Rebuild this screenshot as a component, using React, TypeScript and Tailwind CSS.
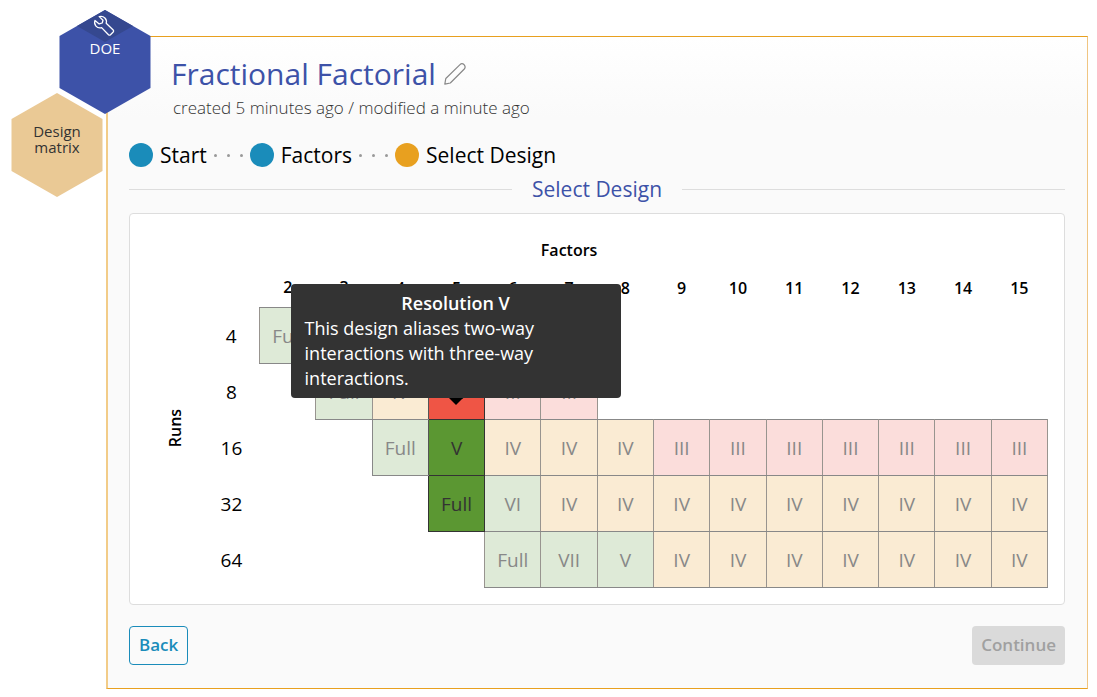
import React from "react";

type Tone = "good" | "fair" | "poor";
type Cell = { label: string; tone: Tone };

const FACTORS = [2, 3, 4, 5, 6, 7, 8, 9, 10, 11, 12, 13, 14, 15];

const g = (label: string): Cell => ({ label, tone: "good" });
const f = (label: string): Cell => ({ label, tone: "fair" });
const p = (label: string): Cell => ({ label, tone: "poor" });

const ROWS: { runs: number; first: number; cells: Cell[] }[] = [
  { runs: 4, first: 2, cells: [g("Full"), p("III")] },
  { runs: 8, first: 3, cells: [g("Full"), f("IV"), p("III"), p("III"), p("III")] },
  {
    runs: 16,
    first: 4,
    cells: [g("Full"), g("V"), f("IV"), f("IV"), f("IV"), p("III"), p("III"), p("III"), p("III"), p("III"), p("III"), p("III")],
  },
  {
    runs: 32,
    first: 5,
    cells: [g("Full"), g("VI"), f("IV"), f("IV"), f("IV"), f("IV"), f("IV"), f("IV"), f("IV"), f("IV"), f("IV")],
  },
  {
    runs: 64,
    first: 6,
    cells: [g("Full"), g("VII"), g("V"), f("IV"), f("IV"), f("IV"), f("IV"), f("IV"), f("IV"), f("IV")],
  },
];

const ACTIVE_FACTORS = 5;

const FADED: Record<Tone, string> = {
  good: "bg-[#deead7] text-[#888888]",
  fair: "bg-[#faebd3] text-[#888888]",
  poor: "bg-[#fbdddb] text-[#888888]",
};
const ACTIVE: Record<Tone, string> = {
  good: "bg-[#5b9732] text-[#333333]",
  fair: "bg-[#e8a01f] text-[#333333]",
  poor: "bg-[#ef5545] text-[#333333]",
};

function Hexagon({ className }: { className: string }) {
  return (
    <svg viewBox="0 0 92 104" className={`absolute inset-0 h-full w-full ${className}`} aria-hidden="true">
      <polygon points="46,0 91.500,26 91.500,78 46,104 .5,78 .5,26" fill="currentColor" />
    </svg>
  );
}

function Tooltip() {
  return (
    <div
      role="tooltip"
      className="absolute right-1/2 bottom-full z-10 mb-[22px] -mr-[164px] w-[330px] rounded bg-[#333333] px-3.5 py-[7px] text-left text-[18px] leading-[25px] font-medium text-white"
    >
      <p className="text-center font-semibold">Resolution V</p>
      <p>This design aliases two-way interactions with three-way interactions.</p>
      <span className="absolute top-full left-1/2 h-0 w-0 -translate-x-1/2 border-x-[7px] border-t-[7px] border-x-transparent border-t-black" />
    </div>
  );
}

function Step({ label, color }: { label: string; color: string }) {
  return (
    <li className="flex items-center gap-[7px]">
      <span className={`size-6 rounded-full ${color}`} />
      {label}
    </li>
  );
}

function Dots() {
  return (
    <li aria-hidden="true" className="flex w-[43px] items-center justify-center gap-[10px]">
      <span className="size-[3px] rounded-full bg-[#999999]" />
      <span className="size-[3px] rounded-full bg-[#999999]" />
      <span className="size-[3px] rounded-full bg-[#999999]" />
    </li>
  );
}

function DesignTable() {
  return (
    <table className="w-full table-fixed border-collapse">
      <thead>
        <tr className="h-[38px]">
          <th colSpan={15} className="p-0 pt-0.5 text-base font-semibold">Factors</th>
          <td />
        </tr>
      </thead>
      <tbody>
        <tr className="h-[39px]">
          <th rowSpan={6} className="p-0 text-base font-semibold">
            <span className="inline-block -rotate-90">Runs</span>
          </th>
          <td />
          {FACTORS.map((n) => (
            <th key={n} scope="col" className="p-0 text-base font-semibold">{n}</th>
          ))}
        </tr>
        {ROWS.map((row) => {
          const last = row.first + row.cells.length - 1;
          return (
            <tr key={row.runs} className="h-14">
              <th scope="row" className="p-0 pt-px text-[19px] leading-6 font-normal">{row.runs}</th>
              {FACTORS.map((n) => {
                if (n < row.first || n > last) return <td key={n} />;
                const cell = row.cells[n - row.first];
                const active = n === ACTIVE_FACTORS;
                const edge = active
                  ? "border-[#333333]"
                  : n === ACTIVE_FACTORS - 1
                    ? "border-[#888888] border-r-[#555555]"
                    : "border-x-[#98948f] border-y-[#888888]";
                return (
                  <td key={n} className={`border p-0 ${edge} ${active ? ACTIVE[cell.tone] : FADED[cell.tone]}`}>
                    <div className="relative">
                      <button type="button" className="block h-[55px] w-full pt-px text-[19px] leading-6">{cell.label}</button>
                      {active && row.runs === 16 && <Tooltip />}
                    </div>
                  </td>
                );
              })}
            </tr>
          );
        })}
      </tbody>
    </table>
  );
}

export default function App() {
  return (
    <div className="bg-white pt-9 pr-[9px] pb-2 pl-[106px] font-['Open_Sans',sans-serif] text-black">
      <nav>
        <a href="#doe" className="absolute top-[10px] left-[59px] z-10 block h-[104px] w-[92px] text-center text-[15px] leading-5 text-white">
          <Hexagon className="text-[#3d52a8]" />
          <svg viewBox="0 0 92 104" className="absolute inset-0 h-full w-full" aria-hidden="true">
            <polygon points="46,0 74,16 46,32 18,16" fill="#35488f" />
            <g transform="translate(35 6)" fill="none" stroke="#fff" strokeWidth="1.3" strokeLinejoin="round">
              <path d="M5.200 .6 9 4.200 8.200 7 5.200 7.900 1 4.500C-.6 8.800 3 12.700 7.600 11.600L14.500 18.700Q15.500 19.600 16.500 18.700L19.200 16Q20.100 15 19.200 14L12.200 7.300C13.400 3.400 9.800-.8 5.200 .6Z" />
            </g>
          </svg>
          <span className="relative mt-7 block">DOE</span>
        </a>
        <a href="#design-matrix" className="absolute top-[93px] left-[11px] flex h-[104px] w-[92px] items-center justify-center pb-3 text-center text-[15px] leading-4 text-[#333333]">
          <Hexagon className="text-[#eac995]" />
          <span className="relative">Design<br />matrix</span>
        </a>
      </nav>
      <main className="border border-l-2 border-y-[#e8a01f] border-r-[#f0c582] border-l-[#f2cc88] bg-[#fafafa] bg-[linear-gradient(#ffffff,#fafafa_80px)] pt-4 pr-[22px] pb-[23px] pl-[21px]">
        <header className="pl-[42px]">
          <div className="flex items-center gap-2">
            <h1 className="text-[30px] leading-[42px] text-[#3d52a8]">Fractional Factorial</h1>
            <button type="button" aria-label="Rename">
              <svg viewBox="0 0 22 22" className="size-[22px]" fill="none" stroke="#888888" strokeWidth="1.2" strokeLinejoin="round" aria-hidden="true">
                <path d="M.8 21.200 1.800 15.500 16 1.600Q18-.2 20.200 1.800 22 4 20.300 6L6.300 20 .8 21.200Z" />
              </svg>
            </button>
          </div>
          <p className="pt-px pl-0.5 text-[17px] leading-6 font-light text-[#333333]">created 5 minutes ago / modified a minute ago</p>
        </header>
        <ol className="mt-5 flex items-center text-[21px] leading-[30px]">
          <Step label="Start" color="bg-[#1a8cba]" />
          <Dots />
          <Step label="Factors" color="bg-[#1a8cba]" />
          <Dots />
          <Step label="Select Design" color="bg-[#e8a01f]" />
        </ol>
        <div className="mt-1 flex items-center gap-5">
          <span className="h-px flex-1 bg-[#dddddd]" />
          <h2 className="text-[21px] leading-[30px] text-[#3d52a8]">Select Design</h2>
          <span className="h-px flex-1 bg-[#dddddd]" />
        </div>
        <section className="mt-[9px] rounded border border-[#dddddd] bg-white py-4 pr-4 pl-[17px]">
          <DesignTable />
        </section>
        <footer className="mt-[21px] flex justify-between">
          <button type="button" className="h-[39px] rounded border border-[#1a8cba] px-[9px] text-[17px] font-semibold text-[#1a8cba]">Back</button>
          <button type="button" disabled className="h-[39px] rounded bg-[#dadada] px-[9px] text-[17px] font-semibold text-[#a0a0a0]">Continue</button>
        </footer>
      </main>
    </div>
  );
}
